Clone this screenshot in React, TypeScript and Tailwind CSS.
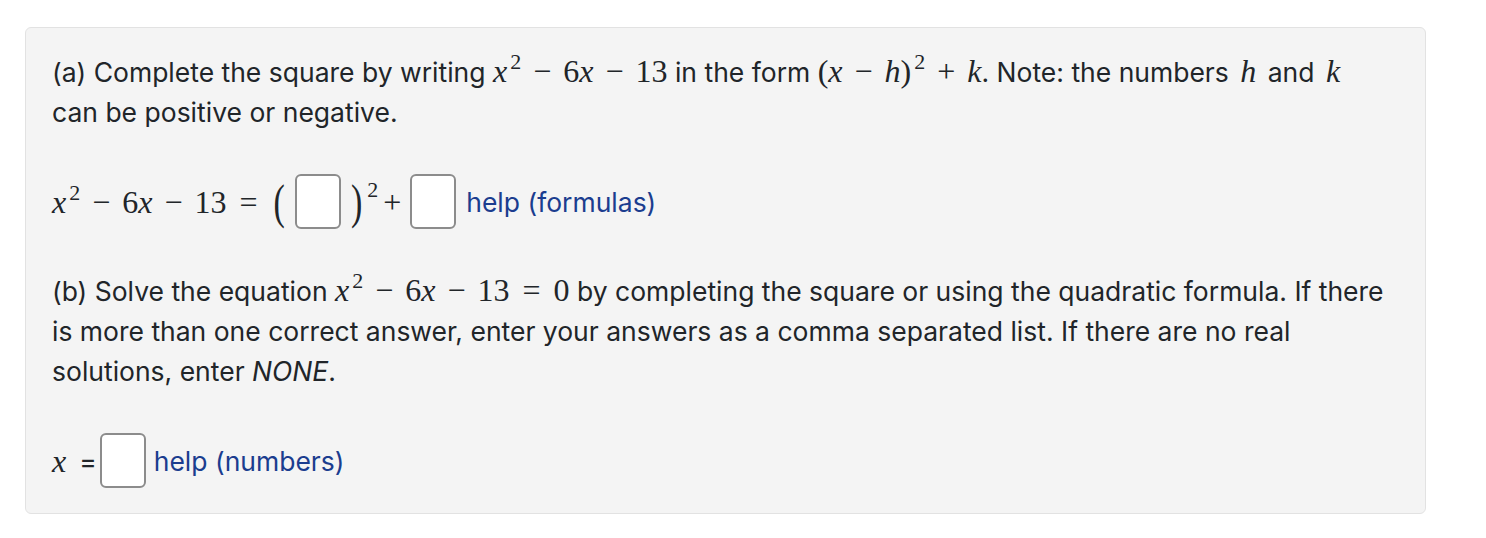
const serif = "font-['Liberation_Serif',serif]";

const V = ({ children }: { children: React.ReactNode }) => (
  <span className={`${serif} italic`}>{children}</span>
);

const N = ({ children }: { children: React.ReactNode }) => (
  <span className={serif}>{children}</span>
);

const Sup = ({ children }: { children: React.ReactNode }) => (
  <span className={`${serif} text-[22px] relative -top-[13px] ml-[3px]`}>{children}</span>
);

const Op = ({ children }: { children: React.ReactNode }) => (
  <span className={`${serif} mx-[12px]`}>{children}</span>
);

const Rel = ({ children }: { children: React.ReactNode }) => (
  <span className={`${serif} mx-[13px]`}>{children}</span>
);

const M = ({ children }: { children: React.ReactNode }) => (
  <span className="text-[32px] leading-none">{children}</span>
);

const Box = () => (
  <span className="inline-block w-[46px] h-[55px] bg-white border-2 border-[#8c8c8c] rounded-[6px] align-middle" />
);

const Quad = ({ eq }: { eq?: boolean }) => (
  <M>
    <V>x</V>
    <Sup>2</Sup>
    <Op>−</Op>
    <N>6</N>
    <V>x</V>
    <Op>−</Op>
    <N>13</N>
    {eq && (
      <>
        <Rel>=</Rel>
        <N>0</N>
      </>
    )}
  </M>
);

export default function App() {
  return (
    <div className="bg-white min-h-screen pt-[27px] pl-[25px] font-['Inter',sans-serif] text-[#212529]">
      <div className="w-[1401px] h-[487px] bg-[#f4f4f4] border border-[#e2e2e2] rounded-[6px] px-[26px] pt-[24px] flex flex-col gap-[42px] text-[26.5px] leading-[40px]">
        <p>
          (a) Complete the square by writing <Quad /> in the form{" "}
          <M>
            <N>(</N>
            <V>x</V>
            <Op>−</Op>
            <V>h</V>
            <N>)</N>
            <Sup>2</Sup>
            <Op>+</Op>
            <V>k</V>
          </M>
          . Note: the numbers <M><span className="mx-[4px]"><V>h</V></span></M> and{" "}
          <M><span className="ml-[4px]"><V>k</V></span></M>
          <br />
          can be positive or negative.
        </p>

        <div className="flex items-center h-[55px]">
          <Quad />
          <M><Rel>=</Rel></M>
          <span className={`${serif} text-[34px] leading-none scale-y-[1.45] font-light mr-[10px] ml-[3px]`}>(</span>
          <Box />
          <span className={`${serif} text-[34px] leading-none scale-y-[1.45] font-light ml-[10px]`}>)</span>
          <span className={`${serif} text-[22px] leading-none self-start mt-[5px] ml-[5px]`}>2</span>
          <span className={`${serif} text-[32px] leading-none ml-[5px] mr-[9px]`}>+</span>
          <Box />
          <a className="ml-[10px] text-[#1b3d8f]">help (formulas)</a>
        </div>

        <p>
          (b) Solve the equation <Quad eq /> by completing the square or using the quadratic formula. If there
          <br />
          is more than one correct answer, enter your answers as a comma separated list. If there are no real
          <br />
          solutions, enter <em>NONE</em>.
        </p>

        <div className="flex items-center h-[55px]">
          <M><V>x</V></M>
          <span className="ml-[13px] mr-[3px]">=</span>
          <Box />
          <a className="ml-[8px] text-[#1b3d8f]">help (numbers)</a>
        </div>
      </div>
    </div>
  );
}
